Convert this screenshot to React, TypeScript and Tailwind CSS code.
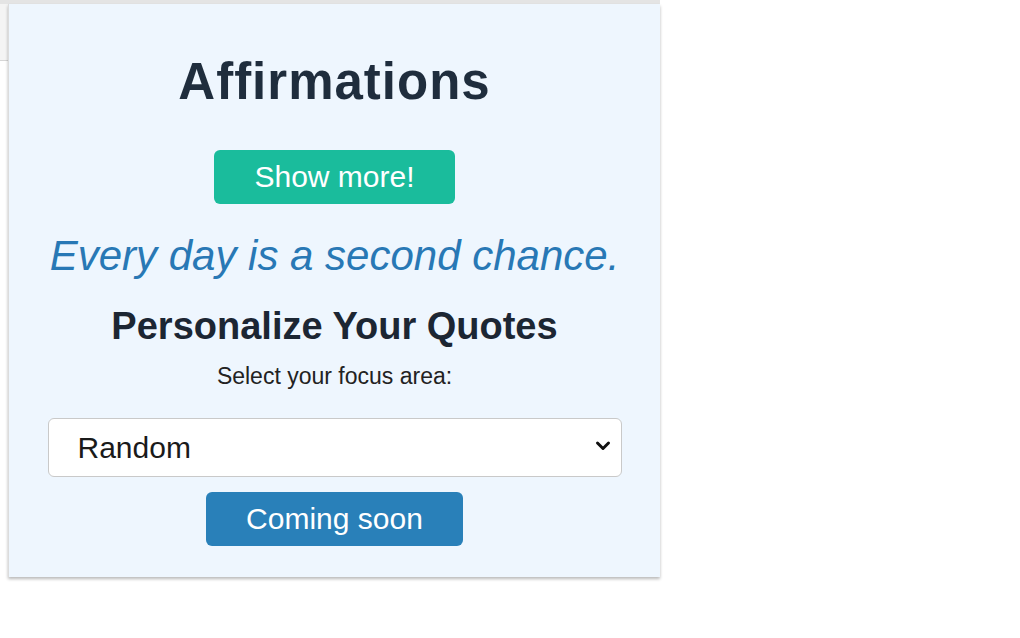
import { useState } from "react";

const FOCUS_AREAS = ["Random", "Confidence", "Gratitude", "Motivation", "Self-love"];

export default function App() {
  const [focus, setFocus] = useState("Random");

  return (
    <div className="w-[1020px] h-[638px] bg-white font-['Liberation_Sans',Arial,sans-serif]">
      <div className="h-[4px] w-[660px] bg-[#e4e4e4]" />
      <div className="flex">
        {/* sliver of the page behind the popup */}
        <div className="w-[8px]">
          <div className="h-[57px] bg-[#f4f4f4] border-b border-[#d6d6d6]" />
        </div>

        <div className="w-[652px] h-[573px] bg-[#eef6fe] border-l border-[#dcdcdc] shadow-[0_2px_3px_rgba(0,0,0,0.28)] flex flex-col items-center pt-[52px]">
          <h1 className="text-[51px] leading-none font-bold tracking-[1px] text-[#1f2d3d]">Affirmations</h1>

          <button
            type="button"
            className="mt-[43px] w-[241px] h-[54px] rounded-[6px] bg-[#1abc9c] text-white text-[30px] leading-none"
          >
            Show more!
          </button>

          <p className="mt-[31px] text-[42px] leading-none italic text-[#2878b5]">
            Every day is a second chance.
          </p>

          <h2 className="mt-[30px] text-[38px] leading-none font-bold text-[#1c2633]">Personalize Your Quotes</h2>

          <label htmlFor="focus" className="mt-[20px] text-[23px] leading-none text-[#222]">
            Select your focus area:
          </label>

          <div className="relative mt-[30px] w-[574px]">
            <select
              id="focus"
              value={focus}
              onChange={(e) => setFocus(e.target.value)}
              className="appearance-none w-full h-[59px] rounded-[6px] border border-[#c9c9c9] bg-white pl-[29px] text-[30px] text-[#1a1a1a] outline-none"
            >
              {FOCUS_AREAS.map((area) => (
                <option key={area} value={area}>
                  {area}
                </option>
              ))}
            </select>
            <svg
              className="pointer-events-none absolute right-[11px] top-[22px]"
              width="16"
              height="12"
              viewBox="0 0 16 12"
              fill="none"
            >
              <path d="M2.5 3 L8 8.5 L13.5 3" stroke="#111" strokeWidth="3" strokeLinecap="round" strokeLinejoin="round" />
            </svg>
          </div>

          <button
            type="button"
            className="mt-[15px] w-[257px] h-[54px] rounded-[6px] bg-[#2980b9] text-white text-[30px] leading-none"
          >
            Coming soon
          </button>
        </div>
      </div>
    </div>
  );
}
